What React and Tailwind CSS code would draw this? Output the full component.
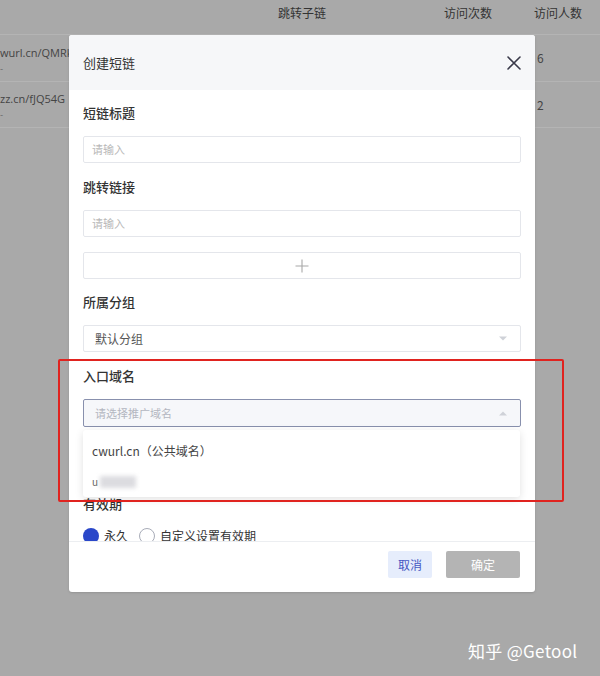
import React from "react";

const FONT = { fontFamily: '"Noto Sans CJK SC", "Noto Sans", sans-serif' };

function Label({ children, className = "" }) {
  return (
    <div className={`h-5 leading-5 text-[13px] font-medium text-[#333] ${className}`}>{children}</div>
  );
}

function Input({ placeholder, className = "" }) {
  return (
    <div className={`h-[27px] border border-[#e4e6eb] rounded-[2px] flex items-center px-[8px] text-[11px] text-[#b8b8b8] ${className}`}>
      {placeholder}
    </div>
  );
}

function Caret({ up }) {
  return (
    <svg width="10" height="6" viewBox="0 0 10 6">
      {up ? <path d="M1 5.5 L5 1.5 L9 5.5 Z" fill="#cfd2d8" /> : <path d="M1 0.5 L5 4.5 L9 0.5 Z" fill="#cfd2d8" />}
    </svg>
  );
}

export default function App() {
  return (
    <div className="relative w-[600px] h-[676px] overflow-hidden bg-[#a9a9a9] text-[#3a3a3a]" style={FONT}>
      {/* Background table */}
      <div className="grid grid-cols-[278px_166px_90px_66px] h-[35px] items-start pt-[4px] text-[12px] text-[#333] border-b border-[#b4b4b4]">
        <div></div>
        <div>跳转子链</div>
        <div>访问次数</div>
        <div>访问人数</div>
      </div>
      <div className="grid grid-cols-[278px_166px_90px_66px] h-[47px] items-center text-[11px] text-[#444] border-b border-[#b4b4b4]">
        <div className="flex flex-col leading-[16px] pt-[6px]">
          <span style={{ fontFamily: '"Open Sans", sans-serif' }}>wurl.cn/QMRk</span>
          <span className="text-[9px] text-[#666]">-</span>
        </div>
        <div></div>
        <div></div>
        <div className="pl-[3px] text-[12px]">6</div>
      </div>
      <div className="grid grid-cols-[278px_166px_90px_66px] h-[46px] items-center text-[11px] text-[#444] border-b border-[#b4b4b4]">
        <div className="flex flex-col leading-[16px] pt-[4px]">
          <span style={{ fontFamily: '"Open Sans", sans-serif' }}>zz.cn/fJQ54G</span>
          <span className="text-[9px] text-[#666]">-</span>
        </div>
        <div></div>
        <div></div>
        <div className="pl-[3px] text-[12px]">2</div>
      </div>

      {/* Modal */}
      <div className="absolute left-[69px] top-[35px] w-[466px] h-[557px] bg-white rounded-[3px] flex flex-col overflow-hidden shadow-sm">
        <div className="h-[55px] shrink-0 bg-[#f6f7f9] flex items-center justify-between pl-[14px] pr-[13px]">
          <span className="text-[13px] text-[#333]">创建短链</span>
          <svg width="16" height="16" viewBox="0 0 16 16" fill="none" stroke="#3a3a4a" strokeWidth="1.6" strokeLinecap="round">
            <path d="M2 2 L14 14 M14 2 L2 14" />
          </svg>
        </div>

        <div className="relative h-[451px] shrink-0 overflow-hidden px-[14px] pt-[13px]">
          <Label>短链标题</Label>
          <Input className="mt-[13px]" placeholder="请输入" />

          <Label className="mt-[14px]">跳转链接</Label>
          <Input className="mt-[13px]" placeholder="请输入" />
          <div className="mt-[15px] h-[27px] border border-[#e4e6eb] rounded-[2px] flex items-center justify-center">
            <svg width="14" height="14" viewBox="0 0 14 14" fill="none" stroke="#a8a8a8" strokeWidth="1.1">
              <path d="M7 0.5 V13.5 M0.5 7 H13.5" />
            </svg>
          </div>

          <Label className="mt-[13px]">所属分组</Label>
          <div className="mt-[13px] h-[27px] border border-[#e4e6eb] rounded-[2px] flex items-center justify-between pl-[11px] pr-[12px] text-[12px] text-[#555]">
            <span>默认分组</span>
            <Caret />
          </div>

          <Label className="mt-[14px]">入口域名</Label>
          <div className="mt-[13px] h-[28px] border border-[#8890ad] bg-[#f6f7fa] rounded-[2px] flex items-center justify-between pl-[11px] pr-[12px] text-[11px] text-[#b3b6c0]">
            <span>请选择推广域名</span>
            <Caret up />
          </div>

          <div className="mt-[16px] h-[36px] text-[11px] text-[#777] leading-[18px]">
            <div>2</div>
            <div>'</div>
          </div>

          <Label className="mt-[15px]">有效期</Label>
          <div className="mt-[14px] flex items-center text-[12px] text-[#333] h-[16px]">
            <span className="w-[16px] h-[16px] rounded-full bg-[#2a47c9] inline-block"></span>
            <span className="ml-[5px]">永久</span>
            <span className="ml-[11px] w-[16px] h-[16px] rounded-full border border-[#a8acb8] inline-block"></span>
            <span className="ml-[5px]">自定义设置有效期</span>
          </div>

          {/* Dropdown */}
          <div className="absolute left-[14px] top-[340px] w-[437px] h-[67px] bg-white rounded-[3px] shadow-[0_2px_8px_rgba(0,0,0,0.12)] flex flex-col pt-[6px] text-[12px] text-[#444]">
            <div className="h-[31px] flex items-center px-[9px]">cwurl.cn（公共域名）</div>
            <div className="h-[31px] flex items-center px-[9px]">
              <span className="text-[10px] text-[#666]">u</span>
              <span className="ml-[2px] w-[36px] h-[12px] bg-[#dcdce0] blur-[2px] inline-block"></span>
            </div>
          </div>
        </div>

        <div className="h-[51px] shrink-0 border-t border-[#eceef1] flex items-start pt-[9px] justify-end gap-[14px] pr-[15px]">
          <button className="w-[44px] h-[27px] rounded-[2px] bg-[#e6edfc] text-[12px] text-[#4557c2]">取消</button>
          <button className="w-[74px] h-[27px] rounded-[2px] bg-[#b4b4b4] text-[12px] text-white">确定</button>
        </div>
      </div>

      {/* Red highlight box */}
      <div className="absolute left-[58px] top-[359px] w-[506px] h-[143px] border-[2.5px] border-[#e0231f] rounded-[2px]"></div>

      {/* Watermark */}
      <div className="absolute left-[468px] top-[638px] text-[17px] text-white tracking-[0.3px]" style={{ fontFamily: '"Noto Sans CJK SC", "Noto Sans", sans-serif' }}>
        知乎 @Getool
      </div>
    </div>
  );
}
